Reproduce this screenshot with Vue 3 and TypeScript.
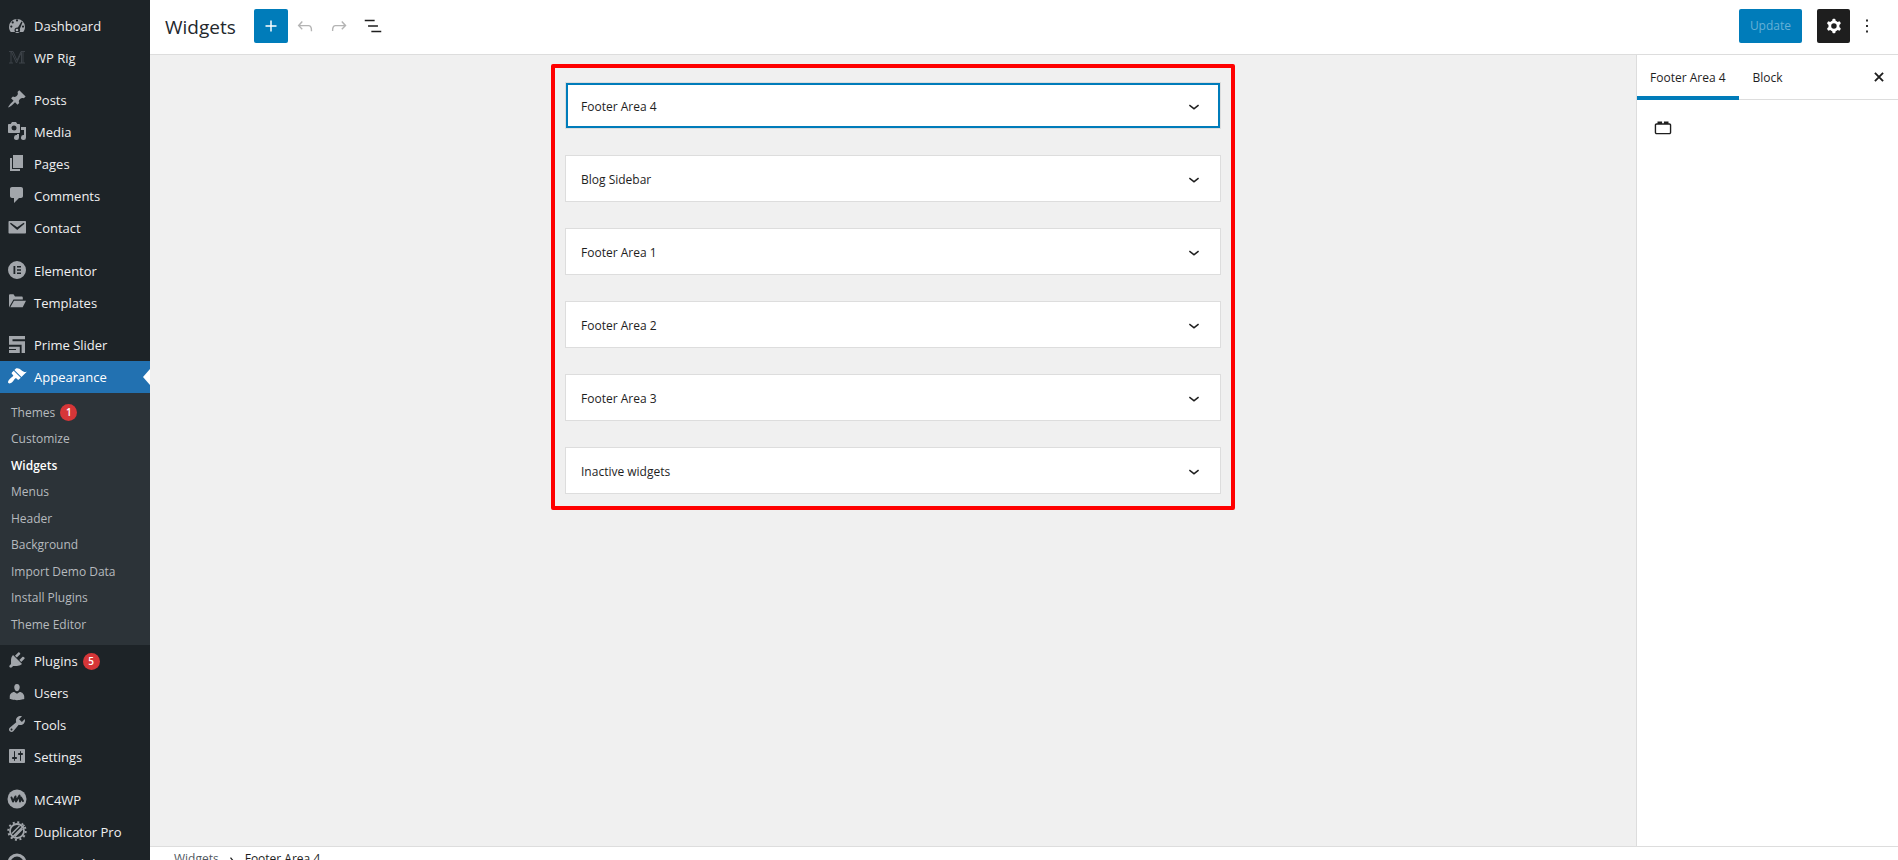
<script setup lang="ts">
interface MenuItem {
  label: string
  icon: string
  count?: number
}

interface MenuGroup {
  spacing: 'none' | 'narrow' | 'wide'
  items: MenuItem[]
}

const topGroups: MenuGroup[] = [
  {
    spacing: 'none',
    items: [
      { label: 'Dashboard', icon: 'dashboard' },
      { label: 'WP Rig', icon: 'rig' },
    ],
  },
  {
    spacing: 'narrow',
    items: [
      { label: 'Posts', icon: 'pin' },
      { label: 'Media', icon: 'media' },
      { label: 'Pages', icon: 'pages' },
      { label: 'Comments', icon: 'comment' },
      { label: 'Contact', icon: 'mail' },
    ],
  },
  {
    spacing: 'wide',
    items: [
      { label: 'Elementor', icon: 'elementor' },
      { label: 'Templates', icon: 'folder' },
    ],
  },
  {
    spacing: 'narrow',
    items: [
      { label: 'Prime Slider', icon: 'prime' },
      { label: 'Appearance', icon: 'brush' },
    ],
  },
  {
    spacing: 'none',
    items: [
      { label: 'Plugins', icon: 'plug', count: 5 },
      { label: 'Users', icon: 'user' },
      { label: 'Tools', icon: 'wrench' },
      { label: 'Settings', icon: 'sliders' },
    ],
  },
  {
    spacing: 'wide',
    items: [
      { label: 'MC4WP', icon: 'mc4wp' },
      { label: 'Duplicator Pro', icon: 'duplicator' },
      { label: 'Smart Slider', icon: 'ring' },
    ],
  },
]

const appearanceLinks: { label: string; count?: number }[] = [
  { label: 'Themes', count: 1 },
  { label: 'Customize' },
  { label: 'Widgets' },
  { label: 'Menus' },
  { label: 'Header' },
  { label: 'Background' },
  { label: 'Import Demo Data' },
  { label: 'Install Plugins' },
  { label: 'Theme Editor' },
]

const areas: string[] = [
  'Footer Area 4',
  'Blog Sidebar',
  'Footer Area 1',
  'Footer Area 2',
  'Footer Area 3',
  'Inactive widgets',
]

const icons: Record<string, string> = {
  dashboard:
    '<path fill-rule="evenodd" d="M3.8 17h12.4c1.1-1.4 1.8-3.200 1.800-5.100A8 8 0 0 0 2 11.900C2 13.800 2.700 15.600 3.800 17zM10 4.300a1.100 1.100 0 1 1 0 2.200 1.100 1.100 0 0 1 0-2.200zM5.700 6.300a1.100 1.100 0 1 1 0 2.200 1.100 1.100 0 0 1 0-2.200zm8.800.3 1 .7-2.700 6.700a2.800 2.800 0 1 1-1.900-1.500zM4.300 10.500a1.100 1.100 0 1 1 0 2.200 1.100 1.100 0 0 1 0-2.200zm11.700 0a1.100 1.100 0 1 1 0 2.200 1.100 1.100 0 0 1 0-2.200zM10 13.700a1.300 1.300 0 1 0 0 2.600 1.300 1.300 0 0 0 0-2.600z"/>',
  rig: '<path fill="none" stroke="#3c4248" stroke-width="1" d="M2 4.500h4l4 9 4-9h4M2 16h4M12 16h6M4 4.500V16M16 4.500V16M14.500 6V16M4.500 5l5 11 5-11"/>',
  pin: '<path d="M10.440 3.020l1.820-1.820 6.360 6.350-1.830 1.820c-1.050-.68-2.480-.57-3.410.36l-.75.750c-.92.930-1.040 2.350-.35 3.410l-1.830 1.820-2.410-2.410-2.800 2.790c-.42.420-3.380 2.710-3.800 2.290s1.860-3.390 2.280-3.810l2.790-2.790L4.100 9.360l1.830-1.820c1.050.69 2.480.57 3.400-.36l.75-.75c.93-.92 1.050-2.350.36-3.410z"/>',
  media:
    '<path fill-rule="evenodd" d="M13 11V4c0-.55-.45-1-1-1h-1.670L9 1H5L3.670 3H2c-.55 0-1 .45-1 1v7c0 .55.450 1 1 1h10c.55 0 1-.45 1-1zM7 4.500a2.500 2.500 0 1 1 0 5 2.500 2.500 0 0 1 0-5zM14 6h5v10.500a2.500 2.500 0 1 1-2-2.450V9h-3zm-4 8.050V13h2v3.500a2.500 2.500 0 1 1-2-2.450z"/>',
  pages: '<path d="M6 15V2h10v13zm-1 1h8v2H3V5h2z"/>',
  comment: '<path d="M5 2h9c1.100 0 2 .9 2 2v7c0 1.100-.9 2-2 2h-2l-5 5v-5H5c-1.100 0-2-.9-2-2V4c0-1.100.9-2 2-2z"/>',
  mail: '<path fill-rule="evenodd" d="M2.500 4h15.500c.6 0 1 .4 1 1v10.500c0 .6-.4 1-1 1H2.500c-.6 0-1-.4-1-1V5c0-.6.4-1 1-1zm1.300 1.800-.8 1 7.200 6.200 7.300-6.200-.8-1-6.500 4.500z"/>',
  elementor:
    '<path fill-rule="evenodd" d="M10 1a9 9 0 1 1 0 18 9 9 0 0 1 0-18zM6.500 6v8h1.800V6zm3.500 0v1.600h4V6zm0 3.200v1.600h4V9.200zm0 3.200V14h4v-1.600z"/>',
  folder: '<path d="M2 15.500V3.500c0-.8.500-1.300 1.300-1.300h3.200L8 4.500h6.500c.8 0 1.300.5 1.300 1.300V7.500H6.500L3 13.500zM7 8.700h12l-3.300 6.500H3.300z"/>',
  prime: '<path d="M2 2h16v3.300H5.500v2H18V19h-3.400v-8.300H2zM2 12.700h10.800V19H2v-3h7v-1H2z"/>',
  brush:
    '<path d="M14.480 11.060 7.410 3.990l1.500-1.500c.5-.56 2.300-.47 3.510.32 1.210.8 1.430 1.280 2.910 2.100 1.180.64 2.450 1.260 4.450.85zm-.71.710L6.700 4.700 4.930 6.470c-.39.390-.39 1.020 0 1.410l1.060 1.060c.39.390.39 1.030 0 1.420-.6.600-1.430 1.110-2.210 1.690-.35.260-.7.530-1.010.84C1.430 14.230.4 16.080 1.400 17.070c.99 1 2.840-.03 4.180-1.360.31-.31.580-.66.850-1.020.570-.78 1.080-1.610 1.690-2.210.39-.39 1.020-.39 1.410 0l1.060 1.060c.39.390 1.020.39 1.410 0z"/>',
  plug: '<path d="M13.110 4.360 9.870 7.600 8 5.730l3.240-3.240c.35-.34 1.050-.2 1.560.32.520.51.660 1.210.31 1.550zm-8 1.770.91-1.120 9.010 9.010-1.190.84c-.71.710-2.630 1.160-3.820 1.160H6.140L4.900 17.260c-.59.590-1.540.59-2.120 0-.59-.58-.59-1.530 0-2.120l1.240-1.240v-3.880c0-1.130.400-3.190 1.090-3.890zm7.260 3.970 3.240-3.240c.34-.35 1.040-.21 1.550.31.520.51.660 1.210.31 1.550l-3.240 3.250z"/>',
  user: '<path d="M10 9.250c-2.270 0-2.730-3.440-2.730-3.440C7 4.020 7.820 2 9.970 2c2.160 0 2.980 2.020 2.710 3.810 0 0-.41 3.440-2.680 3.440zm0 2.570L12.720 10c2.390 0 4.520 2.330 4.520 4.530v2.490s-3.650 1.130-7.240 1.130c-3.650 0-7.240-1.130-7.240-1.130v-2.490c0-2.250 1.940-4.480 4.470-4.480z"/>',
  wrench:
    '<path fill-rule="evenodd" d="M16.680 9.770c-1.340 1.340-3.300 1.670-4.950.99l-5.410 6.520c-.99.990-2.590.99-3.580 0s-.99-2.590 0-3.570l6.520-5.420c-.68-1.650-.35-3.610.99-4.950 1.280-1.280 3.120-1.620 4.720-1.060l-2.890 2.890 2.820 2.820 2.860-2.870c.53 1.580.180 3.390-1.080 4.650zM3.810 16.210c.4.390 1.040.39 1.430 0 .4-.4.400-1.040 0-1.430-.39-.4-1.030-.4-1.430 0-.39.390-.39 1.030 0 1.430z"/>',
  sliders:
    '<path fill-rule="evenodd" d="M18 16V4c0-.55-.45-1-1-1H3c-.55 0-1 .45-1 1v12c0 .55.450 1 1 1h14c.55 0 1-.45 1-1zM8 11h1c.55 0 1 .45 1 1s-.45 1-1 1H8v1.500c0 .28-.22.500-.5.500s-.5-.22-.5-.5V13H6c-.55 0-1-.45-1-1s.45-1 1-1h1V5.500c0-.28.220-.5.500-.5s.5.220.5.500zm5-2h-1c-.55 0-1-.45-1-1s.45-1 1-1h1V5.500c0-.28.220-.5.500-.5s.5.220.5.500V7h1c.55 0 1 .45 1 1s-.45 1-1 1h-1v5.500c0 .28-.22.500-.5.500s-.5-.22-.5-.5z"/>',
  mc4wp:
    '<circle cx="10" cy="10" r="9.500"/><path fill="none" stroke="#1d2327" stroke-width="2" stroke-linejoin="round" stroke-linecap="round" d="M4.500 8.500 6 12.500 8.500 7.500 9 12.500 12.500 6.500 13 12.500 14 8.500l2 3.500"/>',
  duplicator:
    '<circle cx="10" cy="10" r="7" fill="none" stroke="currentColor" stroke-width="1.800"/><circle cx="10" cy="10" r="8.700" fill="none" stroke="currentColor" stroke-width="2" stroke-dasharray="2 2.555"/><path fill="none" stroke="currentColor" stroke-width="1.400" d="M5 12.500 12.500 5M4 17.500 17.500 4M8 15.500 15.500 8"/>',
  ring: '<circle cx="10" cy="10" r="8" fill="none" stroke="currentColor" stroke-width="3"/>',
}
</script>

<template>
  <div class="shell">
    <nav class="menu" aria-label="Main menu">
      <ul v-for="(group, g) in topGroups" :key="g" :class="['group', group.spacing]">
        <li v-for="item in group.items" :key="item.label">
          <a href="#" :class="['item', { current: item.label === 'Appearance' }]">
            <svg class="glyph" viewBox="0 0 20 20" aria-hidden="true" v-html="icons[item.icon]"></svg>
            <span>{{ item.label }}</span>
            <span v-if="item.count" class="count">{{ item.count }}</span>
          </a>
          <ul v-if="item.label === 'Appearance'" class="submenu">
            <li v-for="link in appearanceLinks" :key="link.label">
              <a href="#" :class="['sublink', { active: link.label === 'Widgets' }]">
                {{ link.label }}
                <span v-if="link.count" class="count">{{ link.count }}</span>
              </a>
            </li>
          </ul>
        </li>
      </ul>
    </nav>

    <div class="editor">
      <header class="bar">
        <h1>Widgets</h1>
        <div class="tools">
          <button class="tool add" aria-label="Add block">
            <svg viewBox="0 0 24 24"><path d="M18 11.200h-5.200V6h-1.600v5.200H6v1.600h5.200V18h1.600v-5.200H18z" /></svg>
          </button>
          <button class="tool faded" aria-label="Undo" disabled>
            <svg viewBox="0 0 24 24"><path d="M18.300 11.700c-.6-.6-1.400-.9-2.300-.9H6.700l2.900-3.300-1.100-1-4.500 5L8.500 16l1-1-2.700-2.700H16c.5 0 .9.200 1.300.5 1 1 1 3.400 1 4.500v.3h1.500v-.2c0-1.500 0-4.300-1.500-5.700z" /></svg>
          </button>
          <button class="tool faded" aria-label="Redo" disabled>
            <svg viewBox="0 0 24 24"><path d="M15.600 6.500l-1.100 1 2.900 3.300H8c-.9 0-1.700.3-2.300.9-1.400 1.500-1.400 4.200-1.400 5.600v.2h1.500v-.3c0-1.100 0-3.500 1-4.500.3-.3.700-.5 1.300-.5h9.200L14.500 15l1.100 1.100 4.600-4.600z" /></svg>
          </button>
          <button class="tool" aria-label="List view">
            <svg viewBox="0 0 24 24"><path d="M13.800 5.200H3v1.500h10.800zm-3.600 12v1.500H21v-1.500zm7.200-6H6.600v1.500h10.800z" /></svg>
          </button>
        </div>
        <div class="actions">
          <button class="update" disabled>Update</button>
          <button class="settings" aria-label="Settings">
            <svg viewBox="0 0 24 24"><path fill-rule="evenodd" d="M10.289 4.836A1 1 0 0 1 11.275 4h1.306a1 1 0 0 1 .987.836l.244 1.466c.787.260 1.503.679 2.108 1.218l1.393-.522a1 1 0 0 1 1.216.437l.653 1.130a1 1 0 0 1-.23 1.273l-1.148.944a6.025 6.025 0 0 1 0 2.435l1.149.946a1 1 0 0 1 .23 1.272l-.653 1.130a1 1 0 0 1-1.216.437l-1.394-.522c-.605.540-1.320.958-2.108 1.218l-.244 1.466a1 1 0 0 1-.987.836h-1.306a1 1 0 0 1-.986-.836l-.244-1.466a5.995 5.995 0 0 1-2.108-1.218l-1.394.522a1 1 0 0 1-1.217-.436l-.653-1.131a1 1 0 0 1 .23-1.272l1.149-.946a6.026 6.026 0 0 1 0-2.435l-1.148-.944a1 1 0 0 1-.23-1.272l.653-1.131a1 1 0 0 1 1.217-.437l1.393.522a5.994 5.994 0 0 1 2.108-1.218zM14.929 12a3 3 0 1 1-6 0 3 3 0 0 1 6 0z" /></svg>
          </button>
          <button class="more" aria-label="Options">
            <svg viewBox="0 0 24 24"><path d="M13 19h-2v-2h2zm0-6h-2v-2h2zm0-6h-2V5h2z" /></svg>
          </button>
        </div>
      </header>

      <div class="body">
        <main class="canvas">
          <div class="frame">
            <button v-for="(area, i) in areas" :key="area" :class="['area', { selected: i === 0 }]" aria-expanded="false">
              <span>{{ area }}</span>
              <svg viewBox="0 0 24 24" aria-hidden="true"><path d="M17.500 11.600 12 16l-5.500-4.400.9-1.200L12 14l4.500-3.600z" /></svg>
            </button>
          </div>
        </main>
        <aside class="inspector">
          <div class="tabs">
            <button class="tab on">Footer Area 4</button>
            <button class="tab">Block</button>
            <button class="close" aria-label="Close settings">
              <svg viewBox="0 0 24 24"><path fill="none" stroke="currentColor" stroke-width="3.200" d="M5 5l14 14M19 5 5 19" /></svg>
            </button>
          </div>
          <svg class="block-icon" viewBox="0 0 24 24" aria-hidden="true"><path fill-rule="evenodd" d="M19 8h-1V6h-5v2h-2V6H6v2H5c-1.100 0-2 .9-2 2v8c0 1.100.9 2 2 2h14c1.100 0 2-.9 2-2v-8c0-1.100-.9-2-2-2zm.5 10c0 .3-.2.500-.5.500H5c-.3 0-.5-.2-.5-.5v-8c0-.3.200-.5.500-.5h14c.3 0 .5.200.5.500z" /></svg>
        </aside>
      </div>

      <footer class="crumbs">
        <a href="#">Widgets</a>
        <svg viewBox="0 0 24 24" aria-hidden="true"><path d="M10.800 8.600 9.600 9.500 12 12.500l-2.400 3 1.200.9 3.100-3.900z" /></svg>
        <span>Footer Area 4</span>
      </footer>
    </div>
  </div>
</template>

<style>
body {
  margin: 0;
  overflow: hidden;
}
</style>

<style scoped>
* {
  box-sizing: border-box;
}

.shell {
  display: flex;
  height: 100vh;
  overflow: hidden;
  font-family: "Segoe UI", "Open Sans", "Noto Sans", sans-serif;
  font-size: 12px;
  color: #1e1e1e;
}

button {
  font: inherit;
  color: inherit;
  border: 0;
  padding: 0;
  background: none;
}

ul {
  list-style: none;
  margin: 0;
  padding: 0;
}

a {
  color: inherit;
  text-decoration: none;
}

.menu {
  flex: none;
  width: 150px;
  padding-top: 10px;
  background: #1d2327;
  color: #f0f0f1;
  overflow: hidden;
}

.narrow {
  margin-top: 10px;
}

.wide {
  margin-top: 11px;
}

.item {
  position: relative;
  display: flex;
  align-items: center;
  height: 32px;
  padding-left: 7px;
  font-size: 13px;
  line-height: 18px;
  white-space: nowrap;
}

.glyph {
  flex: none;
  width: 20px;
  height: 20px;
  margin: 0 7px 2px 0;
  fill: currentColor;
  color: #a2a6ab;
}

.current {
  background: #2271b1;
  color: #fff;
}

.current .glyph {
  color: #fff;
}

.current::after {
  content: "";
  position: absolute;
  right: 0;
  top: 8px;
  border: 8px solid transparent;
  border-left-width: 0;
  border-right: 7px solid #fff;
}

.count {
  display: inline-block;
  width: 17px;
  height: 17px;
  margin-left: 5px;
  border-radius: 50%;
  background: #d63638;
  color: #fff;
  font-size: 10px;
  font-weight: 600;
  line-height: 17px;
  text-align: center;
}

.submenu {
  display: flex;
  flex-direction: column;
  justify-content: space-between;
  height: 252px;
  padding: 6px 0 8px;
  background: #2c3338;
}

.sublink {
  display: flex;
  align-items: center;
  height: 26px;
  padding-left: 11px;
  color: #b6babe;
}

.active {
  color: #fff;
  font-weight: 600;
}

.editor {
  flex: 1;
  min-width: 0;
  display: flex;
  flex-direction: column;
}

.bar {
  flex: none;
  display: flex;
  align-items: center;
  height: 55px;
  padding: 0 14px 3px 15px;
  border-bottom: 1px solid #ddd;
  background: #fff;
}

h1 {
  margin: 3px 18px 0 0;
  font-size: 19px;
  font-weight: 400;
  line-height: 26px;
  color: #23282d;
}

.tools,
.actions {
  display: flex;
  align-items: center;
}

.actions {
  margin-left: auto;
}

.tool {
  display: grid;
  place-items: center;
  width: 34px;
  height: 34px;
}

.tool svg {
  width: 22px;
  height: 22px;
}

svg {
  fill: currentColor;
}

.add {
  background: #007cba;
  border-radius: 2px;
  color: #fff;
}

.faded {
  color: #b4b4b4;
}

.update {
  height: 34px;
  padding: 0 11px;
  border-radius: 2px;
  background: #007cba;
  color: #66b0d6;
}

.settings {
  display: grid;
  place-items: center;
  width: 33px;
  height: 34px;
  margin-left: 15px;
  border-radius: 2px;
  background: #1e1e1e;
  color: #fff;
}

.settings svg,
.more svg {
  width: 22px;
  height: 22px;
}

.more {
  display: grid;
  place-items: center;
  width: 34px;
}

.body {
  flex: 1;
  min-height: 0;
  display: flex;
}

.canvas {
  flex: 1;
  padding-top: 9px;
  background: #f0f0f0;
}

.frame {
  display: flex;
  flex-direction: column;
  gap: 26px;
  width: 684px;
  margin: 0 auto;
  padding: 14px 10px 12px;
  border: 4px solid #f00;
  border-radius: 2px;
}

.area {
  display: flex;
  align-items: center;
  justify-content: space-between;
  height: 47px;
  padding: 1px 15px 0;
  border: 1px solid #ddd;
  background: #fff;
}

.area svg {
  width: 22px;
  height: 22px;
}

.selected {
  box-shadow: inset 0 0 0 2px #007cba;
}

.inspector {
  flex: none;
  width: 262px;
  border-left: 1px solid #ddd;
  background: #fff;
}

.tabs {
  display: flex;
  height: 45px;
  border-bottom: 1px solid #ddd;
}

.tab {
  height: 45px;
  padding: 0 14px;
}

.on {
  border-bottom: 4px solid #007cba;
  padding: 4px 13px 0;
}

.close {
  display: grid;
  place-items: center;
  width: 30px;
  margin: 0 4px 0 auto;
}

.close svg {
  width: 14px;
  height: 14px;
}

.block-icon {
  display: block;
  width: 22px;
  height: 22px;
  margin: 16px 0 0 15px;
}

.crumbs {
  flex: none;
  display: flex;
  align-items: flex-start;
  gap: 3px;
  height: 14px;
  padding: 3px 24px 0;
  border-top: 1px solid #ddd;
  background: #fff;
  line-height: 18px;
}

.crumbs a {
  color: #50575e;
}

.crumbs svg {
  width: 20px;
  height: 20px;
}
</style>
